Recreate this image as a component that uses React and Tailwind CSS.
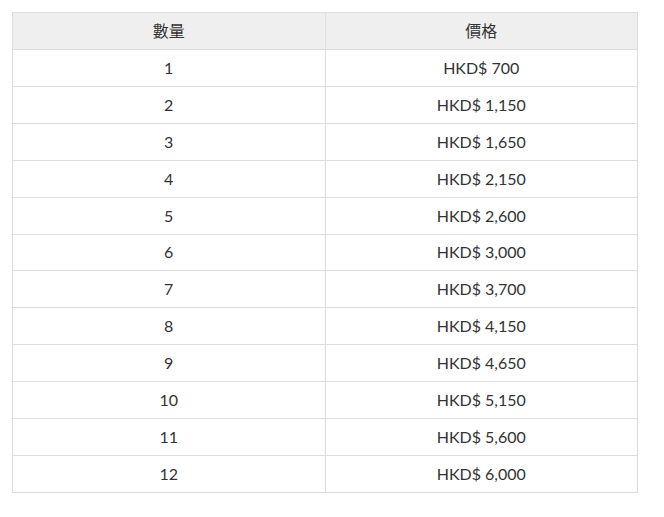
import React from "react";

const rows = [
  ["1", "HKD$ 700"],
  ["2", "HKD$ 1,150"],
  ["3", "HKD$ 1,650"],
  ["4", "HKD$ 2,150"],
  ["5", "HKD$ 2,600"],
  ["6", "HKD$ 3,000"],
  ["7", "HKD$ 3,700"],
  ["8", "HKD$ 4,150"],
  ["9", "HKD$ 4,650"],
  ["10", "HKD$ 5,150"],
  ["11", "HKD$ 5,600"],
  ["12", "HKD$ 6,000"],
];

export default function App() {
  return (
    <div
      className="w-[664px] h-[517px] bg-white pt-[12px] pl-[12px]"
      style={{ fontFamily: 'Lato, "Noto Sans CJK TC", sans-serif' }}
    >
      <table className="w-[626px] border-collapse table-fixed text-[16px] text-[#333]">
        <thead>
          <tr className="bg-[#efefef]">
            <th className="h-[37px] border border-[#dddddd] font-normal text-center p-0">數量</th>
            <th className="h-[37px] border border-[#dddddd] font-normal text-center p-0">價格</th>
          </tr>
        </thead>
        <tbody>
          {rows.map(([q, p]) => (
            <tr key={q}>
              <td className="h-[36.92px] border border-[#dddddd] text-center p-0">{q}</td>
              <td className="h-[36.92px] border border-[#dddddd] text-center p-0">{p}</td>
            </tr>
          ))}
        </tbody>
      </table>
    </div>
  );
}
